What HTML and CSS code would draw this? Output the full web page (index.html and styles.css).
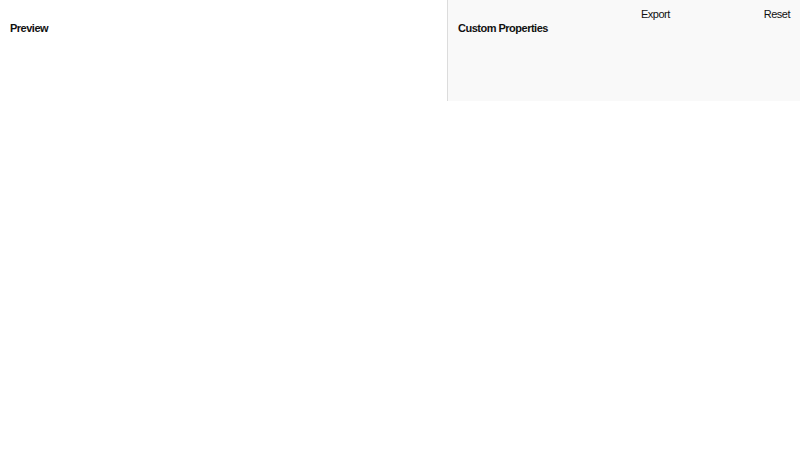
FILE: index.html
```html
<!DOCTYPE html>
<html lang="en">
<head>
<meta charset="utf-8">
<title>Custom Properties</title>
<link rel="stylesheet" href="styles.css">
</head>
<body>
<div class="app">
  <section class="preview">
    <h2 class="title">Preview</h2>
  </section>
  <aside class="props">
    <div class="actions">
      <button class="btn btn-export" type="button">Export</button>
      <button class="btn" type="button">Reset</button>
    </div>
    <h2 class="title">Custom Properties</h2>
  </aside>
</div>
</body>
</html>
```

FILE: styles.css
```css
html, body {
  margin: 0;
  padding: 0;
  background: #ffffff;
  font-family: "Liberation Sans", Arial, sans-serif;
  color: #000;
}

.app {
  display: grid;
  grid-template-columns: 447px 1fr;
  height: 101px;
}

.preview {
  padding: 21px 10px 10px;
}

.props {
  position: relative;
  background: #f9f9f9;
  border-left: 1px solid #dcdcdc;
  padding: 21px 10px 10px;
}

.title {
  margin: 0;
  font-size: 11px;
  line-height: 14px;
  letter-spacing: -0.5px;
  font-weight: bold;
  color: #111;
}

.actions {
  position: absolute;
  top: 0;
  right: 0;
  display: flex;
}

.btn {
  font-family: "Liberation Sans", Arial, sans-serif;
  font-size: 11px;
  line-height: 14px;
  letter-spacing: -0.5px;
  padding: 7px 10px;
  margin: 0;
  border: none;
  background: transparent;
  color: #111;
}

.btn-export {
  margin-right: 74px;
}
```
